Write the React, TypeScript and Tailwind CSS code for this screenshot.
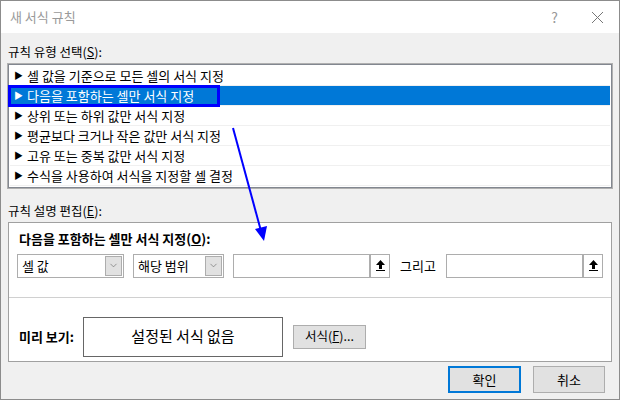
import { ChevronDown } from 'lucide-react';

const rules = [
  '셀 값을 기준으로 모든 셀의 서식 지정',
  '다음을 포함하는 셀만 서식 지정',
  '상위 또는 하위 값만 서식 지정',
  '평균보다 크거나 작은 값만 서식 지정',
  '고유 또는 중복 값만 서식 지정',
  '수식을 사용하여 서식을 지정할 셀 결정',
];

const font = { fontFamily: '"Noto Sans CJK KR", "Noto Sans", sans-serif' };

const Select = ({ label, width }: { label: string; width: string }) => (
  <div className={`flex h-[24px] items-center border border-[#adadad] bg-white pl-1 ${width}`}>
    <span className="flex-1 text-[13px] text-black">{label}</span>
    <div className="mr-[1px] flex h-[20px] w-[17px] items-center justify-center border border-[#adadad] bg-[#e1e1e1]">
      <ChevronDown size={11} strokeWidth={1.2} className="text-[#555]" />
    </div>
  </div>
);

const RefInput = ({ width }: { width: string }) => (
  <div className={`flex h-[24px] items-center justify-end border border-[#adadad] bg-white ${width}`}>
    <div className="flex h-[22px] w-[20px] items-center justify-center border-l-2 border-[#adadad] bg-white">
      <svg width="9" height="11" viewBox="0 0 9 11">
        <path d="M4.5 0 L9 5 L6 5 L6 9 L3 9 L3 5 L0 5 Z" fill="black" />
        <rect x="0" y="10" width="9" height="1" fill="black" />
      </svg>
    </div>
  </div>
);

export default function App() {
  return (
    <div className="relative h-[400px] w-[620px] overflow-hidden border border-[#8c8c8c] bg-[#f0f0f0] text-[12px]" style={font}>
      <div className="flex h-[32px] items-center bg-white pl-[9px] pr-[16px]">
        <span className="flex-1 text-[13px] text-[#999]">새 서식 규칙</span>
        <span className="mr-[34px] text-[14px] text-[#999]">?</span>
        <svg width="11" height="11" viewBox="0 0 11 11">
          <path d="M0 0 L11 11 M11 0 L0 11" stroke="#777" strokeWidth="1" />
        </svg>
      </div>

      <div className="px-[7px]">
        <div className="mt-[10px] h-[20px] text-[12.5px] text-black">규칙 유형 선택(<u>S</u>):</div>
        <div className="mt-[1px] border border-[#828790] bg-white p-[1px] outline outline-1 outline-[#b0b0b0]">
          {rules.map((r, i) => (
            <div
              key={r}
              className={`flex h-[20px] items-center gap-[4px] border-b border-[#f0f0f0] pl-[4px] text-[13px] ${
                i === 1 ? 'bg-[#0078d7] text-white' : 'text-black'
              }`}
            >
              <span className="text-[9px]">▶</span>
              <span>{r}</span>
            </div>
          ))}
        </div>

        <div className="mt-[14px] h-[20px] text-[12.5px] text-black">규칙 설명 편집(<u>E</u>):</div>
        <div className="flex h-[140px] flex-col border border-[#a0a0a0] bg-white">
          <div className="px-[10px] pt-[6px] text-[13px] font-bold text-black">다음을 포함하는 셀만 서식 지정(<u>O</u>):</div>
          <div className="mt-[5px] flex items-center px-[8px]">
            <Select label="셀 값" width="w-[107px]" />
            <div className="w-[9px]" />
            <Select label="해당 범위" width="w-[91px]" />
            <div className="w-[9px]" />
            <RefInput width="w-[157px]" />
            <span className="ml-[10px] w-[46px] text-[13px] text-black">그리고</span>
            <RefInput width="w-[157px]" />
          </div>
          <div className="mt-[19px] border-t border-[#d0d0d0]" />
          <div className="mt-[19px] flex items-center px-[10px]">
            <span className="w-[64px] text-[13px] font-bold text-black">미리 보기:</span>
            <div className="flex h-[40px] w-[200px] items-center justify-center border border-[#666] text-[15px] text-black">
              설정된 서식 없음
            </div>
            <div className="ml-[10px] flex h-[24px] w-[73px] items-center justify-center border border-[#adadad] bg-[#e1e1e1] text-[12.5px] text-black">
              서식(<u>F</u>)...
            </div>
          </div>
        </div>

        <div className="mt-[4px] flex justify-end gap-[12px] pr-[7px]">
          <div className="flex h-[27px] w-[73px] items-center justify-center border-2 border-[#0078d7] bg-[#e1e1e1] text-[13px] text-black">확인</div>
          <div className="flex h-[27px] w-[72px] items-center justify-center border border-[#adadad] bg-[#e1e1e1] text-[13px] text-black">취소</div>
        </div>
      </div>

      {/* annotation overlay */}
      <div className="absolute left-[7px] top-[84px] h-[22px] w-[212px] border-[3px] border-[#0000ff]" />
      <svg className="absolute left-0 top-0" width="620" height="400">
        <line x1="232" y1="127" x2="260" y2="230" stroke="#0000ff" strokeWidth="2" />
        <path d="M254 228 L263 240 L266 225 Z" fill="#0000ff" />
      </svg>
    </div>
  );
}
